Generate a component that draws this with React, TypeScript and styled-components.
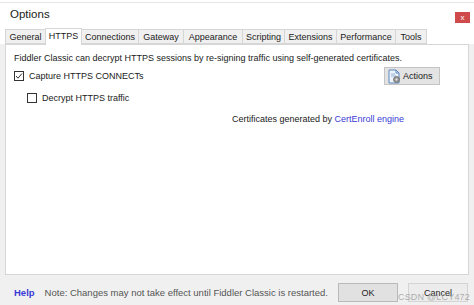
import React from "react";
import styled, { createGlobalStyle } from "styled-components";

const Global = createGlobalStyle`
  html, body { margin: 0; padding: 0; background: #ffffff; }
  body { font-family: "Liberation Sans", Arial, sans-serif; }
`;

const Window = styled.div`
  width: 474px;
  height: 305px;
  box-sizing: border-box;
  display: flex;
  flex-direction: column;
  background: #f0f0f0;
  border-top: 1px solid #e6e6e6;
  margin-top: 2px;
  font-size: 9px;
  color: #1a1a1a;
  position: relative;
  overflow: hidden;
`;

const TitleBar = styled.div`
  height: 24px;
  flex: none;
  background: #ffffff;
  display: flex;
  align-items: center;
  justify-content: space-between;
  padding: 0 4px 0 10px;
`;

const Title = styled.span`
  font-size: 11.5px;
  color: #222;
  margin-top: -2px;
`;

const CloseBtn = styled.div`
  width: 15px;
  height: 11px;
  background: #cf4a4a;
  color: #fff;
  font-size: 8px;
  line-height: 11px;
  text-align: center;
  margin-top: 5px;
`;

const TabStrip = styled.div`
  display: flex;
  align-items: flex-end;
  height: 17px;
  padding-left: 6px;
  background: #ffffff;
  flex: none;
  position: relative;
  z-index: 1;
`;

const Tab = styled.div<{ $w: number; $active?: boolean }>`
  width: ${(p) => p.$w}px;
  box-sizing: border-box;
  height: ${(p) => (p.$active ? 17 : 15)}px;
  margin-bottom: ${(p) => (p.$active ? -1 : 0)}px;
  border: 1px solid #d6d6d6;
  border-bottom: ${(p) => (p.$active ? "none" : "1px solid #d6d6d6")};
  margin-left: -1px;
  background: ${(p) => (p.$active ? "#ffffff" : "#f0f0f0")};
  display: flex;
  align-items: center;
  justify-content: center;
  padding-bottom: ${(p) => (p.$active ? 3 : 0)}px;
  white-space: nowrap;
  color: #222;
`;

const Panel = styled.div`
  height: 231px;
  flex: none;
  margin: 0 5px 0 5px;
  background: #ffffff;
  border: 1px solid #d6d6d6;
  box-sizing: border-box;
  padding: 7px 8px 0 8px;
  display: flex;
  flex-direction: column;
`;

const Intro = styled.div`
  height: 13px;
  line-height: 13px;
  white-space: nowrap;
`;

const Row = styled.div<{ $indent?: number; $h: number }>`
  display: flex;
  align-items: center;
  height: ${(p) => p.$h}px;
  padding-left: ${(p) => p.$indent ?? 0}px;
`;

const Check = styled.span`
  width: 10px;
  height: 10px;
  box-sizing: border-box;
  border: 1px solid #333;
  background: #fff;
  display: inline-flex;
  align-items: center;
  justify-content: center;
  margin-right: 5px;
  flex: none;
`;

const Spacer = styled.div`
  flex: 1;
`;

const ActionBtn = styled.div`
  width: 56px;
  height: 18px;
  box-sizing: border-box;
  border: 1px solid #c4c4c4;
  background: #e3e3e3;
  display: flex;
  align-items: center;
  padding-left: 2px;
  gap: 1px;
  margin-right: 20px;
`;

const CertLine = styled.div`
  padding-left: 218px;
  margin-top: 4px;
  height: 13px;
  line-height: 13px;
  white-space: nowrap;
`;

const Link = styled.span<{ $bold?: boolean }>`
  color: #3a3ad6;
  font-weight: ${(p) => (p.$bold ? 700 : 400)};
`;

const Footer = styled.div`
  flex: 1;
  display: flex;
  align-items: center;
  padding: 3px 6px 0 14px;
  font-size: 9.5px;
`;

const Note = styled.span`
  color: #555;
  margin-left: 10px;
  white-space: nowrap;
`;

const Button = styled.div<{ $faded?: boolean }>`
  width: 63px;
  height: 19px;
  box-sizing: border-box;
  border: 1px solid ${(p) => (p.$faded ? "#d4d4d4" : "#b9b9b9")};
  background: ${(p) => (p.$faded ? "#ececec" : "#e1e1e1")};
  display: flex;
  align-items: center;
  justify-content: center;
  color: #222;
  margin-left: 10px;
  font-size: 9px;
`;

const Watermark = styled.div`
  position: absolute;
  right: 4px;
  bottom: 5px;
  color: rgba(150, 150, 150, 0.75);
  font-size: 9px;
  letter-spacing: 0.2px;
`;

const CertIcon = () => (
  <svg width="15" height="15" viewBox="0 0 15 15">
    <path d="M2 1h7l3 3v10H2z" fill="#eef4fb" stroke="#5b86bf" strokeWidth="1" />
    <path d="M9 1v3h3" fill="none" stroke="#5b86bf" strokeWidth="1" />
    <path d="M4 5h4M4 7h5" stroke="#8fb0d8" strokeWidth="1" />
    <circle cx="9.5" cy="10.5" r="3" fill="#9a9a9a" stroke="#666" strokeWidth="0.8" />
    <circle cx="9.5" cy="10.5" r="1" fill="#eee" />
  </svg>
);

const tabs: [string, number][] = [
  ["General", 41],
  ["HTTPS", 37],
  ["Connections", 58],
  ["Gateway", 46],
  ["Appearance", 60],
  ["Scripting", 43],
  ["Extensions", 53],
  ["Performance", 60],
  ["Tools", 32],
];

export default function App() {
  return (
    <>
      <Global />
      <Window>
        <TitleBar>
          <Title>Options</Title>
          <CloseBtn>x</CloseBtn>
        </TitleBar>
        <TabStrip>
          {tabs.map(([t, w]) => (
            <Tab key={t} $w={w} $active={t === "HTTPS"}>
              {t}
            </Tab>
          ))}
        </TabStrip>
        <Panel>
          <Intro>
            Fiddler Classic can decrypt HTTPS sessions by re-signing traffic using self-generated certificates.
          </Intro>
          <Row $h={22}>
            <Check>
              <svg width="8" height="8" viewBox="0 0 8 8">
                <path d="M1 4l2 2.2L7 1.5" fill="none" stroke="#333" strokeWidth="1" />
              </svg>
            </Check>
            Capture HTTPS CONNECTs
            <Spacer />
            <ActionBtn>
              <CertIcon />
              Actions
            </ActionBtn>
          </Row>
          <Row $h={22} $indent={13}>
            <Check />
            Decrypt HTTPS traffic
          </Row>
          <CertLine>
            Certificates generated by <Link>CertEnroll engine</Link>
          </CertLine>
        </Panel>
        <Footer>
          <Link $bold>Help</Link>
          <Note>Note: Changes may not take effect until Fiddler Classic is restarted.</Note>
          <Spacer />
          <Button>OK</Button>
          <Button $faded>Cancel</Button>
        </Footer>
        <Watermark>CSDN @LCY472</Watermark>
      </Window>
    </>
  );
}
